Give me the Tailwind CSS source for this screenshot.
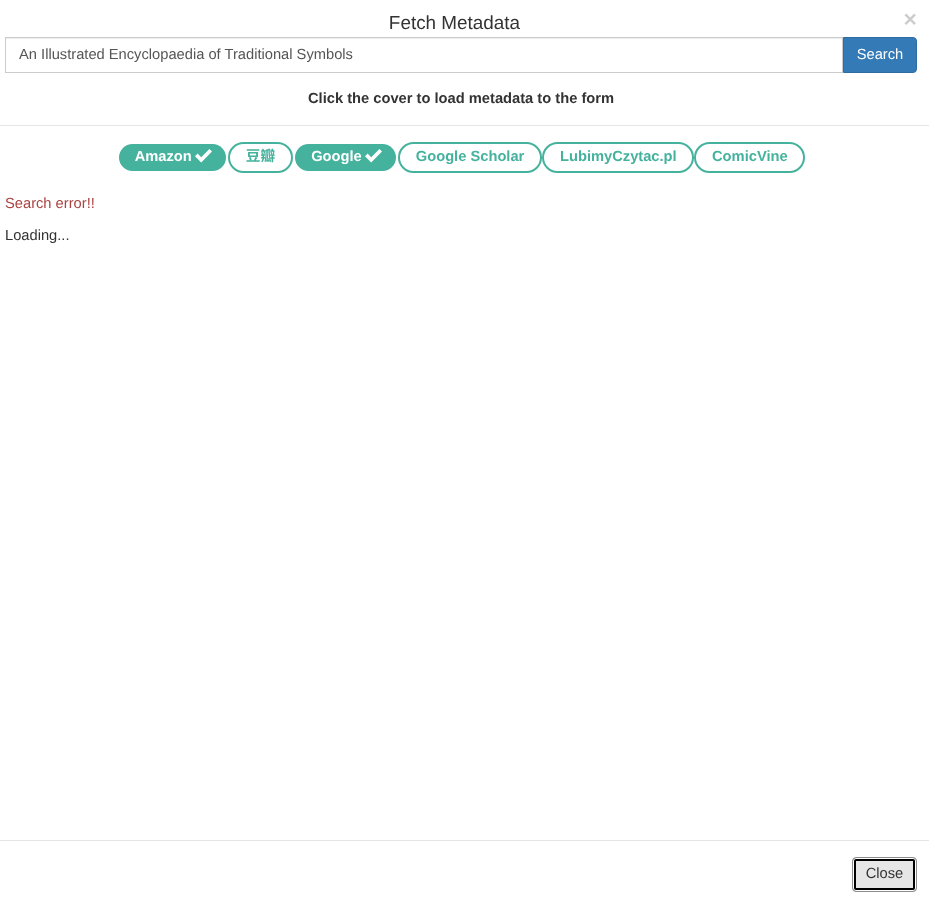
<!DOCTYPE html>
<html lang="en">
<head>
    <meta charset="UTF-8">
    <meta name="viewport" content="width=device-width, initial-scale=1.0">
    <title>Fetch Metadata</title>
    <script src="https://cdn.jsdelivr.net/npm/@tailwindcss/browser@4"></script>
</head>
<body class="bg-white font-['Liberation_Sans','Noto_Sans_CJK_SC',sans-serif] text-[14.7px] leading-[21px] text-[#333] [text-rendering:geometricPrecision]">
    <div class="relative flex h-[905px] flex-col [will-change:opacity]">
        <!-- close x -->
        <button class="absolute right-[12px] top-[7px] text-[23px] font-bold leading-[24px] text-black/20 [text-rendering:geometricPrecision]">×</button>

        <!-- header -->
        <div class="h-[126px] border-b border-[#e5e5e5] pl-[5px] pr-[12px]">
            <h4 class="h-[37px] pr-[13px] pt-[11px] text-center text-[18.9px] leading-[26px]">Fetch Metadata</h4>
            <div class="flex h-[36px]">
                <input type="text" value="An Illustrated Encyclopaedia of Traditional Symbols" class="h-full min-w-0 flex-1 border border-[#ccc] px-[13px] pb-[1px] text-[#555] shadow-[inset_0_1px_1px_rgba(0,0,0,0.075)] outline-none [text-rendering:geometricPrecision]">
                <button class="w-[74px] rounded-r-[4px] border border-[#2e6da4] bg-[#337ab7] text-white [text-rendering:geometricPrecision]">Search</button>
            </div>
            <div class="pt-[16px] text-center font-bold">Click the cover to load metadata to the form</div>
        </div>

        <!-- sources -->
        <div class="flex h-[47px] items-end justify-center pr-[5px]">
            <div class="flex items-center">
                <span class="flex h-[27px] items-center gap-[3px] rounded-full bg-[#45b29d] pb-[1px] pl-[16px] pr-[14px] font-bold text-white">Amazon
                    <svg class="-mt-[3px]" width="17" height="14" viewBox="0 0 17 14"><path d="M0 7.2L2.6 4.6 6.2 8.2 14.4 0 17 2.6 6.2 13.4z" fill="#fff"/></svg>
                </span>
                <span class="ml-[2px] flex h-[31px] items-center rounded-full border-2 border-[#45b29d] px-[16px] pb-[1px] font-bold text-[#45b29d]">豆瓣</span>
                <span class="ml-[2px] flex h-[27px] items-center gap-[3px] rounded-full bg-[#45b29d] pb-[1px] pl-[16px] pr-[14px] font-bold text-white">Google
                    <svg class="-mt-[3px]" width="17" height="14" viewBox="0 0 17 14"><path d="M0 7.2L2.6 4.6 6.2 8.2 14.4 0 17 2.6 6.2 13.4z" fill="#fff"/></svg>
                </span>
                <span class="ml-[2px] flex h-[31px] items-center rounded-full border-2 border-[#45b29d] px-[16px] pb-[1px] font-bold text-[#45b29d]">Google Scholar</span>
                <span class="flex h-[31px] w-[152px] items-center justify-center rounded-full border-2 border-[#45b29d] pb-[1px] font-bold text-[#45b29d]">LubimyCzytac.pl</span>
                <span class="flex h-[31px] w-[111px] items-center justify-center rounded-full border-2 border-[#45b29d] pb-[1px] font-bold text-[#45b29d]">ComicVine</span>
            </div>
        </div>

        <!-- results -->
        <div class="flex-1 px-[5px] pt-[21px]">
            <div class="text-[#a94442]">Search error!!</div>
            <div class="pt-[11px]">Loading...</div>
        </div>

        <!-- footer -->
        <div class="flex h-[65px] items-start justify-end border-t border-[#e5e5e5] pr-[12px] pt-[16px]">
            <button class="h-[35px] w-[65px] rounded-[4px] border border-[#8c8c8c] bg-[#e6e6e6] pb-[1px] text-[#333] shadow-[inset_0_0_0_1px_#fff,inset_0_0_0_3px_#000] [text-rendering:geometricPrecision]">Close</button>
        </div>
    </div>
</body>
</html>
